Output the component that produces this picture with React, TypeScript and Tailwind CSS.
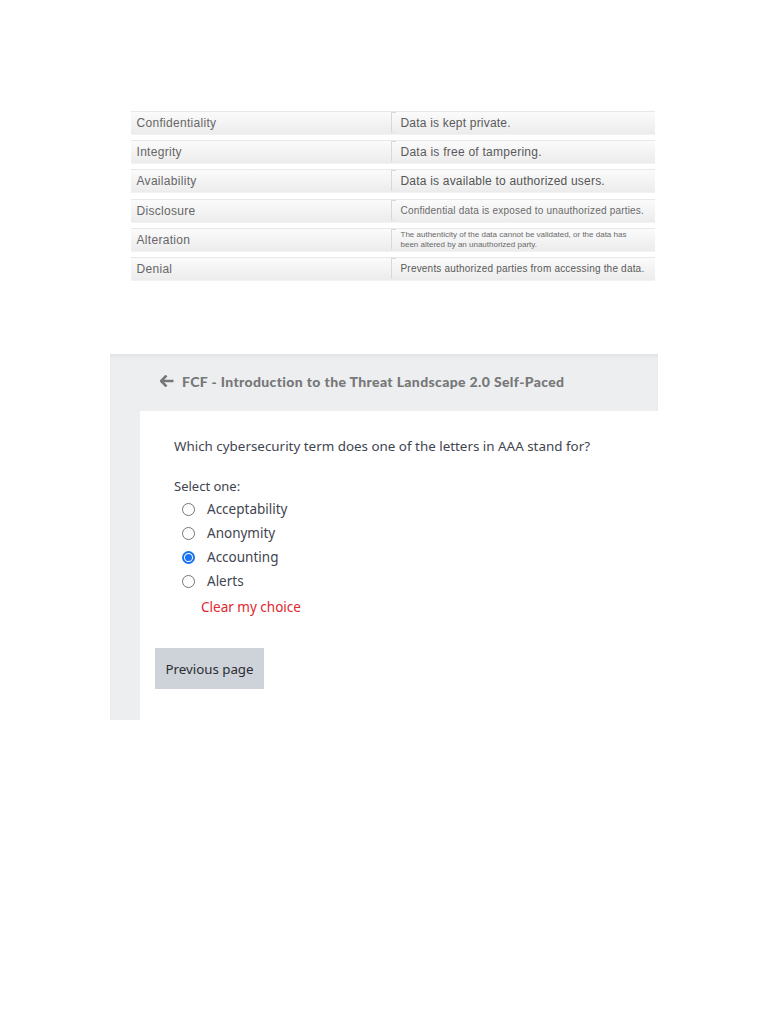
const terms = [
  { term: "Confidentiality", meaning: "Data is kept private.", size: "text-[12px] tracking-[0.2px] text-[#5a5a5a]" },
  { term: "Integrity", meaning: "Data is free of tampering.", size: "text-[12px] tracking-[0.25px] text-[#5a5a5a]" },
  { term: "Availability", meaning: "Data is available to authorized users.", size: "text-[12px] tracking-[0.2px] text-[#555]" },
  { term: "Disclosure", meaning: "Confidential data is exposed to unauthorized parties.", size: "text-[10px] tracking-[0.2px] text-[#6a6a6a]" },
  {
    term: "Alteration",
    meaning: "The authenticity of the data cannot be validated, or the data has been altered by an unauthorized party.",
    size: "max-w-[234px] text-[8px] leading-[9.5px] text-[#6a6a6a]",
  },
  { term: "Denial", meaning: "Prevents authorized parties from accessing the data.", size: "text-[10px] tracking-[0.2px] text-[#5a5a5a]" },
];

const options = [
  { label: "Acceptability", checked: false },
  { label: "Anonymity", checked: false },
  { label: "Accounting", checked: true },
  { label: "Alerts", checked: false },
];

function TermRow({ term, meaning, size }: { term: string; meaning: string; size: string }) {
  return (
    <div className="flex h-[24px] border-t border-b border-t-[#e8e8e8] border-b-[#f2f2f2] bg-gradient-to-b from-[#fbfbfb] to-[#ececec] font-['Liberation_Sans',sans-serif]">
      <div className="flex w-[260px] items-center pl-[5.5px] text-[12px] tracking-[0.3px] text-[#666]">{term}</div>
      <div className="relative flex flex-1 items-center pl-[9.5px] pr-[6px]">
        <span className="absolute left-0 top-0 h-[21px] w-[5px] border-y border-l border-[#d8d8d8] border-b-[#e8e8e8]" />
        <span className={size}>{meaning}</span>
      </div>
    </div>
  );
}

function Radio({ checked }: { checked: boolean }) {
  return checked ? (
    <span className="flex h-[13px] w-[13px] items-center justify-center rounded-full border-2 border-[#1a73f0] bg-white">
      <span className="h-[7px] w-[7px] rounded-full bg-[#1a73f0]" />
    </span>
  ) : (
    <span className="h-[13px] w-[13px] rounded-full border border-[#767676] bg-white" />
  );
}

export default function App() {
  return (
    <div className="min-h-[1024px] bg-white font-['Noto_Sans',sans-serif]">
      <div className="w-[655px] pl-[131px] pt-[111px]">
        <div className="flex flex-col gap-[5.2px]">
          {terms.map((t) => (
            <TermRow key={t.term} {...t} />
          ))}
        </div>
      </div>

      <div className="ml-[110px] mt-[73.5px] flex h-[366px] w-[548px] flex-col bg-[#eceef0] shadow-[inset_0_4px_4px_-2px_#dfe1e3]">
        <div className="flex h-[57px] items-center gap-[8px] pb-[3px] pl-[50px]">
          <svg width="14" height="12" viewBox="0 0 14 12" className="text-[#777]">
            <path d="M6.5 0.5 L1 6 L6.5 11.5 M1.5 6 H13.5" fill="none" stroke="currentColor" strokeWidth="2.6" />
          </svg>
          <span className="font-['Lato',sans-serif] text-[14px] font-black tracking-[0.36px] text-[#777]">
            FCF - Introduction to the Threat Landscape 2.0 Self-Paced
          </span>
        </div>
        <div className="ml-[30px] flex-1 bg-white pl-[34px] pt-[25px] text-[#3f4550]">
          <p className="text-[13.4px] leading-[20px]">Which cybersecurity term does one of the letters in AAA stand for?</p>
          <p className="mt-[20px] text-[13px] leading-[20px]">Select one:</p>
          <div className="mt-[1px] flex flex-col pl-[8px]">
            {options.map((o) => (
              <label key={o.label} className="flex h-[24px] items-center gap-[12px] text-[13.5px]">
                <Radio checked={o.checked} />
                {o.label}
              </label>
            ))}
          </div>
          <p className="ml-[27px] mt-[4px] text-[13.5px] leading-[20px] text-[#e0262e]">Clear my choice</p>
          <button className="-ml-[19px] mt-[31px] block h-[41px] w-[109px] bg-[#ced3d9] pt-[2px] text-[13.3px] text-[#2a2d33]">
            Previous page
          </button>
        </div>
      </div>
    </div>
  );
}
